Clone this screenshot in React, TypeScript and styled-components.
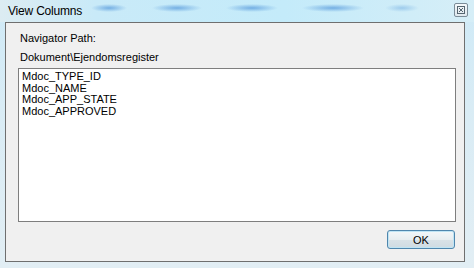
import styled, { createGlobalStyle } from 'styled-components'

const Global = createGlobalStyle`
  html, body {
    margin: 0;
    padding: 0;
    background: #dcecf5;
  }
`

const Window = styled.div`
  width: 474px;
  height: 268px;
  box-sizing: border-box;
  display: flex;
  flex-direction: column;
  font-family: 'Liberation Sans', Arial, sans-serif;
  color: #000;
  background: linear-gradient(180deg, #cfeaf7 0%, #d9ecf5 40%, #e2eef4 100%);
`

const TitleBar = styled.div`
  height: 22px;
  flex: none;
  display: flex;
  align-items: center;
  justify-content: space-between;
  padding: 0 6px 0 8px;
  background:
    radial-gradient(ellipse 18px 4px at 109px 8px, rgba(95, 160, 222, 0.8), transparent),
    radial-gradient(ellipse 25px 4px at 177px 8px, rgba(95, 160, 222, 0.8), transparent),
    radial-gradient(ellipse 26px 4px at 252px 8px, rgba(95, 160, 222, 0.8), transparent),
    radial-gradient(ellipse 31px 4px at 333px 8px, rgba(95, 160, 222, 0.8), transparent),
    radial-gradient(ellipse 17px 4px at 402px 8px, rgba(130, 185, 230, 0.65), transparent),
    linear-gradient(90deg, #dcecf2 0%, #c9eaf8 20%, #c4ebfa 60%, #d6eef7 100%);
`

const Title = styled.span`
  font-size: 12px;
  letter-spacing: -0.2px;
  margin-top: -1px;
`

const CloseBox = styled.div`
  width: 12px;
  height: 12px;
  margin-top: -2px;
  border: 1px solid #7b8c98;
  border-radius: 2px;
  background: linear-gradient(180deg, #f4f8fa, #dfe8ee);
  display: flex;
  align-items: center;
  justify-content: center;
`

const Client = styled.div`
  flex: 1;
  margin: 0 9px 6px 5px;
  border: 1px solid #6f6f6f;
  background: #f0f0f0;
  display: flex;
  flex-direction: column;
  padding: 9px 8px 12px 12px;
  font-size: 11px;
`

const Label = styled.div<{ $gap?: number }>`
  height: 13px;
  line-height: 13px;
  margin-left: 2px;
  margin-top: ${p => p.$gap ?? 0}px;
`

const ListBox = styled.div`
  flex: 1;
  margin-top: 4px;
  background: #fff;
  border: 1px solid #7e7e7e;
  padding: 2px 3px 1px;
`

const Item = styled.div`
  height: 11.5px;
  line-height: 11.5px;
  font-size: 11px;
`

const Footer = styled.div`
  display: flex;
  justify-content: flex-end;
  margin-top: 8px;
  padding-right: 1px;
`

const Button = styled.button`
  width: 68px;
  height: 19px;
  padding: 0;
  font-family: inherit;
  font-size: 11px;
  color: #000;
  border: 1px solid #4f86ad;
  border-radius: 3px;
  background: linear-gradient(180deg, #f3f7f9 0%, #e7edf0 50%, #d9e2e7 51%, #cfdbe2 100%);
  box-shadow: inset 0 0 0 1px #bfe4f4;
`

const columns = ['Mdoc_TYPE_ID', 'Mdoc_NAME', 'Mdoc_APP_STATE', 'Mdoc_APPROVED']

export default function App() {
  return (
    <>
      <Global />
      <Window>
        <TitleBar>
          <Title>View Columns</Title>
          <CloseBox>
            <svg width="8" height="8" viewBox="0 0 8 8">
              <rect x="0.5" y="0.5" width="7" height="7" fill="none" stroke="#55656f" strokeWidth="1" />
              <path d="M2 2 L6 6 M6 2 L2 6" stroke="#55656f" strokeWidth="1" />
            </svg>
          </CloseBox>
        </TitleBar>
        <Client>
          <Label>Navigator Path:</Label>
          <Label $gap={6}>Dokument\Ejendomsregister</Label>
          <ListBox>
            {columns.map(c => (
              <Item key={c}>{c}</Item>
            ))}
          </ListBox>
          <Footer>
            <Button>OK</Button>
          </Footer>
        </Client>
      </Window>
    </>
  )
}
